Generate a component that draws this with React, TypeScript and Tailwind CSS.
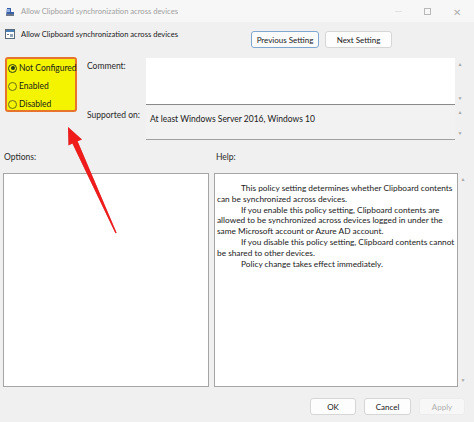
import React from 'react';

function PolicyIcon() {
  return (
    <svg width="10" height="10" viewBox="0 0 10 10">
      <rect x="0.5" y="0.5" width="9" height="9" fill="#ffffff" stroke="#5a6a7a" />
      <rect x="1" y="1" width="8" height="2" fill="#4a7fb5" />
      <rect x="2" y="5" width="2" height="1" fill="#6a7a8a" />
      <rect x="5" y="5" width="3" height="3" fill="#8fa3b8" />
    </svg>
  );
}

function TitleIcon() {
  return (
    <svg width="10" height="10" viewBox="0 0 10 10">
      <path d="M2 1 L6 1 L6 5 L9 5 L9 9 L1 9 Z" fill="#3b5fa8" />
      <rect x="2" y="2" width="3" height="3" fill="#8fb0e0" />
      <rect x="1" y="7" width="8" height="2" fill="#6c7a8c" />
    </svg>
  );
}

function Radio({ checked, label }: { checked?: boolean; label: string }) {
  return (
    <div className="flex h-[18px] items-center gap-[2px] whitespace-nowrap">
      <span
        className={
          checked
            ? 'flex h-[9px] w-[9px] shrink-0 items-center justify-center rounded-full border-[1.5px] border-[#2f3a1c] bg-[#f4f400]'
            : 'h-[9px] w-[9px] shrink-0 rounded-full border border-[#6b6b20] bg-[#f4f400]'
        }
      >
        {checked && <span className="h-[4px] w-[4px] rounded-full bg-[#1e3a1a]" />}
      </span>
      <span className="text-[8.5px] text-[#1a1a1a]">{label}</span>
    </div>
  );
}

function ScrollArrows({ h }: { h: string }) {
  return (
    <div className={`flex w-[10px] flex-col items-center justify-between py-[4px] text-[5px] leading-none text-[#a8a8a8] ${h}`}>
      <span>▲</span>
      <span>▼</span>
    </div>
  );
}

function Btn({ children, focus, disabled, w }: { children: React.ReactNode; focus?: boolean; disabled?: boolean; w: string }) {
  return (
    <div
      className={`flex h-[17px] items-center justify-center rounded-[3px] border text-[8px] ${w} ${
        focus
          ? 'border-[#7fa7cf] bg-[#fbfbfb] text-[#1a1a1a]'
          : disabled
          ? 'border-[#ececec] bg-[#f7f7f7] text-[#b0b0b0]'
          : 'border-[#d6d6d6] bg-[#fdfdfd] text-[#1a1a1a]'
      }`}
    >
      {children}
    </div>
  );
}

export default function App() {
  return (
    <div
      className="relative h-[422px] w-[474px] overflow-hidden bg-[#f0f0f0]"
      style={{ fontFamily: 'Lato, "Noto Sans", sans-serif' }}
    >
      {/* title bar */}
      <div className="flex h-[22px] items-center bg-[#f7f7f7] pl-[5px] pt-[1px]">
        <TitleIcon />
        <span className="ml-[6px] text-[7.6px] text-[#a0a0a0]">Allow Clipboard synchronization across devices</span>
        <div className="ml-auto flex items-center gap-[22px] pr-[13px] text-[#b0b0b0]">
          <span className="block h-px w-[7px] bg-[#e2e2e2]" />
          <span className="block h-[7px] w-[7px] border border-[#b8b8b8]" />
          <span className="text-[10px] leading-none">✕</span>
        </div>
      </div>

      {/* header row */}
      <div className="flex h-[34px]">
        <div className="flex w-[251px] items-start gap-[6px] pl-[5px] pt-[7px]">
          <PolicyIcon />
          <span className="text-[7.6px] leading-[11px] text-[#1a1a1a]">Allow Clipboard synchronization across devices</span>
        </div>
        <div className="flex gap-[6px] pt-[9px]">
          <Btn focus w="w-[68px]">Previous Setting</Btn>
          <Btn w="w-[67px]">Next Setting</Btn>
        </div>
      </div>

      {/* state + comment/supported */}
      <div className="flex h-[85px]">
        <div className="w-[83px] pl-[5px] pt-[1px]">
          <div className="h-[55px] w-[72px] rounded-[3px] border-2 border-[#e8742c] bg-[#f4f400] pl-[1px] pt-0">
            <Radio checked label="Not Configured" />
            <Radio label="Enabled" />
            <Radio label="Disabled" />
          </div>
        </div>
        <div className="flex flex-col pt-[2px]">
          <div className="flex h-[48px]">
            <span className="w-[63px] pl-[4px] pt-[2px] text-[8.5px] text-[#2a2a2a]">Comment:</span>
            <div className="h-[47px] w-[309px] border-b border-[#8a8a8a] bg-white" />
            <ScrollArrows h="h-[47px]" />
          </div>
          <div className="flex h-[34px]">
            <span className="w-[63px] pl-[4px] pt-[3px] text-[8.5px] text-[#2a2a2a]">Supported on:</span>
            <div className="h-[34px] w-[309px] border-b border-[#a0a0a0] bg-[#f2f2f2] pl-[4px] pt-[7px] text-[8.5px] text-[#1a1a1a]">
              At least Windows Server 2016, Windows 10
            </div>
            <ScrollArrows h="h-[34px]" />
          </div>
        </div>
      </div>

      {/* labels */}
      <div className="flex h-[32px] items-center text-[8.5px] text-[#2a2a2a]">
        <span className="w-[216px] pl-[4px]">Options:</span>
        <span>Help:</span>
      </div>

      {/* panes */}
      <div className="flex h-[215px] pl-[3px]">
        <div className="h-[214px] w-[206px] border border-[#a5a5a5] bg-white" />
        <div className="ml-[5px] h-[214px] w-[244px] border border-[#a5a5a5] bg-white px-[2px] pt-[9px] text-[8.3px] leading-[10.8px] text-[#1a1a1a]">
          <p className="indent-[24px]">This policy setting determines whether Clipboard contents can be synchronized across devices.</p>
          <p className="indent-[24px]">
            If you enable this policy setting, Clipboard contents are allowed to be synchronized across devices logged in under the same Microsoft account or Azure AD account.
          </p>
          <p className="indent-[24px]">If you disable this policy setting, Clipboard contents cannot be shared to other devices.</p>
          <p className="indent-[24px]">Policy change takes effect immediately.</p>
        </div>
        <ScrollArrows h="h-[214px]" />
      </div>

      {/* bottom buttons */}
      <div className="flex justify-end gap-[8px] pr-[9px] pt-[10px]">
        <Btn w="w-[46px]">OK</Btn>
        <Btn w="w-[47px]">Cancel</Btn>
        <Btn disabled w="w-[46px]">Apply</Btn>
      </div>

      {/* red annotation arrow */}
      <svg className="pointer-events-none absolute left-0 top-0" width="474" height="422" viewBox="0 0 474 422">
        <polygon
          points="68,127 82,139.5 77.6,141.2 116.6,232.8 115.4,233.2 72.4,143.6 68.5,145.5"
          fill="#f01c1c"
          style={{ filter: 'drop-shadow(0.5px 0.5px 0.6px rgba(120,0,0,0.35))' }}
        />
      </svg>
    </div>
  );
}
